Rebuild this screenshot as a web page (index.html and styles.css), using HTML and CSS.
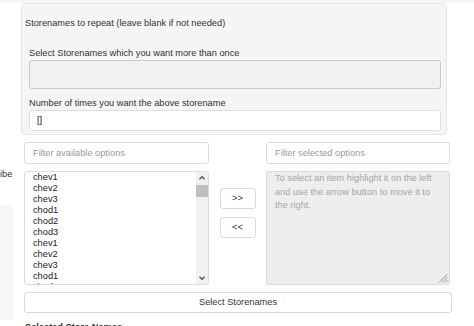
FILE: index.html
```html
<!DOCTYPE html>
<html>
<head>
<meta charset="utf-8">
<link rel="stylesheet" href="styles.css">
</head>
<body>
<div class="topstrip"></div>
<div class="well">
  <div class="well-title">Storenames to repeat (leave blank if not needed)</div>
  <div class="group">
    <div class="lbl lbl-first">Select Storenames which you want more than once</div>
    <div class="selectize"></div>
    <div class="lbl">Number of times you want the above storename</div>
    <div class="txt">[]</div>
  </div>
</div>
<div class="lower">
  <div class="side">
    <div class="side-label">ibe</div>
    <div class="side-strip"></div>
  </div>
  <div class="main">
    <div class="dual">
      <input class="filter" type="text" placeholder="Filter available options">
      <div class="spacer"></div>
      <input class="filter" type="text" placeholder="Filter selected options">
      <div class="listbox">
        <div class="items">
          <div class="item">chev1</div>
          <div class="item">chev2</div>
          <div class="item">chev3</div>
          <div class="item">chod1</div>
          <div class="item">chod2</div>
          <div class="item">chod3</div>
          <div class="item">chev1</div>
          <div class="item">chev2</div>
          <div class="item">chev3</div>
          <div class="item">chod1</div>
          <div class="item">chod2</div>
          <div class="item">chod3</div>
        </div>
        <div class="scrollbar">
          <div class="sb-btn"><svg width="12" height="12" viewBox="0 0 12 12"><polyline points="3.5,7.2 6,4.7 8.5,7.2" fill="none" stroke="#505050" stroke-width="1.3"/></svg></div>
          <div class="sb-thumb"></div>
          <div class="sb-track"></div>
          <div class="sb-btn"><svg width="12" height="12" viewBox="0 0 12 12"><polyline points="3.5,4.8 6,7.3 8.5,4.8" fill="none" stroke="#505050" stroke-width="1.3"/></svg></div>
        </div>
      </div>
      <div class="arrows">
        <div class="abtn">&gt;&gt;</div>
        <div class="abtn">&lt;&lt;</div>
      </div>
      <div class="target">To select an item highlight it on the left and use the arrow button to move it to the right.
        <svg class="grip" width="10" height="10" viewBox="0 0 10 10"><line x1="9.5" y1="1" x2="1" y2="9.5" stroke="#8a8a8a" stroke-width="0.9"/><line x1="9.5" y1="4" x2="4" y2="9.5" stroke="#8a8a8a" stroke-width="0.9"/><line x1="9.5" y1="7" x2="7" y2="9.5" stroke="#8a8a8a" stroke-width="0.9"/></svg>
      </div>
    </div>
    <div class="submit">Select Storenames</div>
    <div class="selected-title">Selected Store Names</div>
  </div>
</div>
</body>
</html>
```

FILE: styles.css
```css
html, body {
  margin: 0;
  padding: 0;
  background: #ffffff;
}
body {
  font-family: "Liberation Sans", Arial, sans-serif;
  font-size: 9.24px;
  color: #333333;
  width: 474px;
  height: 326px;
  overflow: hidden;
}
.topstrip {
  height: 3px;
  background: #f6f6f6;
}
.well {
  box-sizing: border-box;
  margin-left: 21px;
  width: 426px;
  height: 132px;
  background: #f5f5f5;
  border: 1px solid #e6e6e6;
  border-radius: 4px;
  padding: 12.5px 5px 3px 3px;
}
.well-title {
  line-height: 13px;
}
.group {
  padding-left: 4px;
}
.lbl {
  line-height: 13px;
  margin-top: 7.5px;
  margin-bottom: 0.5px;
}
.lbl-first {
  margin-top: 17px;
}
.selectize {
  box-sizing: border-box;
  height: 29px;
  background: #f1f1f1;
  border: 1px solid #c9c9c9;
  border-radius: 3px;
}
.txt {
  box-sizing: border-box;
  height: 21px;
  background: #ffffff;
  border: 1px solid #dedede;
  border-radius: 3px;
  padding-left: 7px;
  line-height: 19px;
  color: #111;
}
.lower {
  display: grid;
  grid-template-columns: 13px 428px;
  column-gap: 11px;
  margin-top: 7px;
}
.side-label {
  margin-top: 25.5px;
  line-height: 13px;
}
.side-strip {
  margin-top: 24.5px;
  height: 115px;
  background: #f7f7f7;
}
.dual {
  display: grid;
  grid-template-columns: 185px 36px 184px;
  grid-template-rows: 22px 114px;
  column-gap: 10.5px;
  row-gap: 7px;
}
.filter {
  box-sizing: border-box;
  width: 100%;
  height: 22px;
  margin: 0;
  padding: 0 0 0 8px;
  border: 1px solid #dcdcdc;
  border-radius: 3px;
  background: #fff;
  font-family: "Liberation Sans", Arial, sans-serif;
  font-size: 9.24px;
  color: #333;
  outline: none;
}
.filter::placeholder {
  color: #999999;
}
.listbox {
  box-sizing: border-box;
  display: flex;
  border: 1px solid #dcdcdc;
  border-radius: 3px;
  background: #fff;
  overflow: hidden;
}
.items {
  flex: 1;
  padding-left: 8px;
  overflow: hidden;
}
.item {
  line-height: 10.95px;
  color: #222;
}
.scrollbar {
  width: 12px;
  display: flex;
  flex-direction: column;
  background: #f1f1f1;
}
.sb-btn {
  height: 12px;
  display: flex;
}
.sb-thumb {
  margin-top: 1px;
  height: 12px;
  background: #bfbfbf;
}
.sb-track {
  flex: 1;
}
.arrows {
  display: flex;
  flex-direction: column;
  gap: 8px;
  padding-top: 17px;
}
.abtn {
  box-sizing: border-box;
  height: 21px;
  border: 1px solid #dcdcdc;
  border-radius: 3px;
  background: #fff;
  text-align: center;
  line-height: 19px;
  font-size: 9.24px;
  color: #333;
}
.target {
  position: relative;
  box-sizing: border-box;
  background: #eeeeee;
  border: 1px solid #d9d9d9;
  border-radius: 3px;
  padding: 0 8px;
  line-height: 13.5px;
  color: #a6a6a6;
}
.grip {
  position: absolute;
  right: 1px;
  bottom: 1px;
}
.submit {
  box-sizing: border-box;
  margin-top: 7px;
  height: 21px;
  border: 1px solid #dcdcdc;
  border-radius: 3px;
  background: #fff;
  text-align: center;
  line-height: 19px;
  color: #333;
}
.selected-title {
  margin-top: 8px;
  margin-left: 1px;
  line-height: 13px;
  font-weight: bold;
}
```
